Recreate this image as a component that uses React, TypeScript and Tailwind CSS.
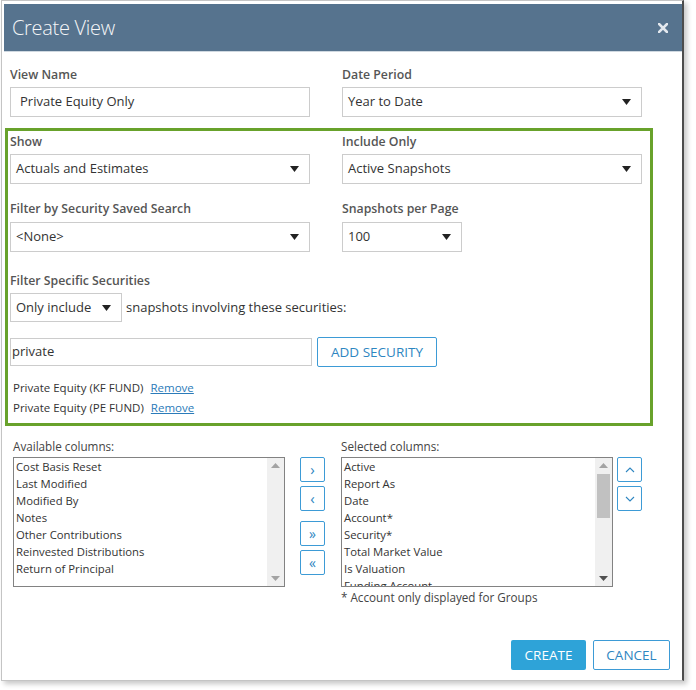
import React from "react"

const availableColumns = [
  "Cost Basis Reset",
  "Last Modified",
  "Modified By",
  "Notes",
  "Other Contributions",
  "Reinvested Distributions",
  "Return of Principal",
]

const selectedColumns = [
  "Active",
  "Report As",
  "Date",
  "Account*",
  "Security*",
  "Total Market Value",
  "Is Valuation",
  "Funding Account",
]

function Caret() {
  return (
    <svg width="9" height="6" viewBox="0 0 9 6" className="shrink-0">
      <polygon points="0,0 9,0 4.5,6" fill="#222" />
    </svg>
  )
}

function Select({ value, className = "" }: { value: string; className?: string }) {
  return (
    <div
      className={`flex items-center justify-between border border-[#cccccc] bg-white pl-[5px] pr-[10px] text-[13px] text-[#333] ${className}`}
    >
      <span>{value}</span>
      <Caret />
    </div>
  )
}

function Label({ children }: { children: React.ReactNode }) {
  return <div className="h-[19px] text-[12.3px] leading-[19px] font-semibold text-[#555]">{children}</div>
}

function ArrowBtn({ children }: { children: React.ReactNode }) {
  return (
    <div className="flex h-[25px] w-[25px] items-center justify-center rounded-[2px] border border-[#3d9bd6] bg-white text-[#2e86c1]">
      {children}
    </div>
  )
}

function ScrollTrack({ thumb }: { thumb?: boolean }) {
  return (
    <div className="flex w-[17px] shrink-0 flex-col items-center bg-[#f0f0f0]">
      <svg width="9" height="5" viewBox="0 0 9 5" className="mt-[5px]">
        <polygon points="0,5 9,5 4.5,0" fill="#a3a3a3" />
      </svg>
      {thumb ? <div className="mt-[6px] h-[44px] w-[13px] bg-[#c1c1c1]" /> : null}
      <div className="flex-1" />
      <svg width="9" height="5" viewBox="0 0 9 5" className="mb-[5px]">
        <polygon points="0,0 9,0 4.5,5" fill={thumb ? "#505050" : "#a3a3a3"} />
      </svg>
    </div>
  )
}

function ListBox({ items, thumb }: { items: string[]; thumb?: boolean }) {
  return (
    <div className="flex h-[130px] w-[272px] border border-[#828282] bg-white">
      <div className="h-[128px] flex-1 overflow-hidden pl-[2px] text-[11.3px] leading-[17px] text-[#333]">
        {items.map((item) => (
          <div key={item} className="whitespace-nowrap">
            {item}
          </div>
        ))}
      </div>
      <ScrollTrack thumb={thumb} />
    </div>
  )
}

function Chevron({ dir }: { dir: "up" | "down" }) {
  return (
    <svg width="10" height="6" viewBox="0 0 10 6">
      <polyline
        points={dir === "up" ? "1,5 5,1 9,5" : "1,1 5,5 9,1"}
        fill="none"
        stroke="#2e86c1"
        strokeWidth="1.1"
      />
    </svg>
  )
}

export default function App() {
  return (
    <div className="h-[690px] w-[696px] bg-white font-['Open_Sans','Noto_Sans',sans-serif]">
      <div className="ml-[1px] flex h-[681px] w-[683px] flex-col border-t border-b border-l border-[#c4c4c4] border-r-[2px] border-r-[#4d4d4d] pt-[3px] pl-[2px] shadow-[3px_3px_5px_rgba(0,0,0,0.22)]">
        {/* header */}
        <div className="flex h-[47px] items-center justify-between bg-[#56738e] pl-[8px] pr-[14px]">
          <span className="mt-[1px] text-[20px] font-light tracking-[-0.3px] text-[#f4f6f8]">Create View</span>
          <svg width="10" height="10" viewBox="0 0 10 10">
            <path d="M1 1 L9 9 M9 1 L1 9" stroke="#e3e8ee" strokeWidth="2.6" strokeLinecap="square" />
          </svg>
        </div>
        <div className="h-[1px] bg-[#cfd8e0]" />

        {/* body */}
        <div className="flex flex-1 flex-col pt-[13px] pl-[1px]">
          <div className="grid grid-cols-[300px_300px] gap-x-[32px] pl-[5px]">
            <div>
              <Label>View Name</Label>
              <div className="mt-[3px] flex h-[30px] items-center border border-[#cccccc] pl-[9px] text-[13px] text-[#333]">
                Private Equity Only
              </div>
            </div>
            <div>
              <Label>Date Period</Label>
              <Select value="Year to Date" className="mt-[3px] h-[30px]" />
            </div>
          </div>

          {/* highlighted block */}
          <div className="mt-[11px] w-[648px] border-[3px] border-[#68a22b] pt-[1px] pb-[5px] pl-[2px]">
            <div className="grid grid-cols-[300px_300px] gap-x-[32px]">
              <div>
                <Label>Show</Label>
                <Select value="Actuals and Estimates" className="mt-[3px] h-[30px]" />
              </div>
              <div>
                <Label>Include Only</Label>
                <Select value="Active Snapshots" className="mt-[3px] h-[30px]" />
              </div>
              <div className="mt-[15px]">
                <Label>Filter by Security Saved Search</Label>
                <Select value="<None>" className="mt-[4px] h-[30px]" />
              </div>
              <div className="mt-[15px]">
                <Label>Snapshots per Page</Label>
                <Select value="100" className="mt-[4px] h-[30px] w-[120px]" />
              </div>
            </div>

            <div className="mt-[19px]">
              <Label>Filter Specific Securities</Label>
              <div className="mt-[3px] flex items-center">
                <Select value="Only include" className="h-[29px] w-[112px]" />
                <span className="ml-[4px] text-[13px] text-[#333]">snapshots involving these securities:</span>
              </div>
            </div>

            <div className="mt-[15px] flex items-center">
              <div className="flex h-[28px] w-[302px] items-center border border-[#cccccc] pl-[1px] text-[13px] text-[#333]">
                private
              </div>
              <div className="ml-[5px] flex h-[30px] w-[120px] items-center justify-center rounded-[2px] border border-[#3d9bd6] text-[13.5px] text-[#2e86c1]">
                ADD SECURITY
              </div>
            </div>

            <div className="mt-[11px] pl-[3px] text-[11.5px] leading-[20px] text-[#333]">
              <div>
                Private Equity (KF FUND)
                <span className="ml-[7px] text-[#2b7bb9] underline">Remove</span>
              </div>
              <div>
                Private Equity (PE FUND)
                <span className="ml-[7px] text-[#2b7bb9] underline">Remove</span>
              </div>
            </div>
          </div>

          {/* columns */}
          <div className="mt-[12px] flex pl-[8px]">
            <div>
              <div className="mb-[3px] h-[16px] text-[11.7px] leading-[16px] text-[#444]">Available columns:</div>
              <ListBox items={availableColumns} />
            </div>
            <div className="mt-[19px] ml-[15px] flex flex-col">
              <ArrowBtn>
                <span className="text-[15px] leading-none">›</span>
              </ArrowBtn>
              <div className="mt-[4px]">
                <ArrowBtn>
                  <span className="text-[15px] leading-none">‹</span>
                </ArrowBtn>
              </div>
              <div className="mt-[10px]">
                <ArrowBtn>
                  <span className="text-[14px] leading-none">»</span>
                </ArrowBtn>
              </div>
              <div className="mt-[4px]">
                <ArrowBtn>
                  <span className="text-[14px] leading-none">«</span>
                </ArrowBtn>
              </div>
            </div>
            <div className="ml-[16px]">
              <div className="mb-[3px] h-[16px] text-[11.7px] leading-[16px] text-[#444]">Selected columns:</div>
              <ListBox items={selectedColumns} thumb />
              <div className="mt-[2px] text-[11.7px] leading-[16px] text-[#444]">* Account only displayed for Groups</div>
            </div>
            <div className="mt-[19px] ml-[4px] flex flex-col">
              <ArrowBtn>
                <Chevron dir="up" />
              </ArrowBtn>
              <div className="mt-[4px]">
                <ArrowBtn>
                  <Chevron dir="down" />
                </ArrowBtn>
              </div>
            </div>
          </div>

          {/* footer */}
          <div className="mt-auto mb-[10px] flex justify-end gap-[7px] pr-[12px]">
            <div className="flex h-[30px] w-[75px] items-center justify-center rounded-[2px] bg-[#2ea3d8] text-[13.5px] text-white">
              CREATE
            </div>
            <div className="flex h-[30px] w-[77px] items-center justify-center rounded-[2px] border border-[#3d9bd6] text-[13.5px] text-[#2e86c1]">
              CANCEL
            </div>
          </div>
        </div>
      </div>
    </div>
  )
}
